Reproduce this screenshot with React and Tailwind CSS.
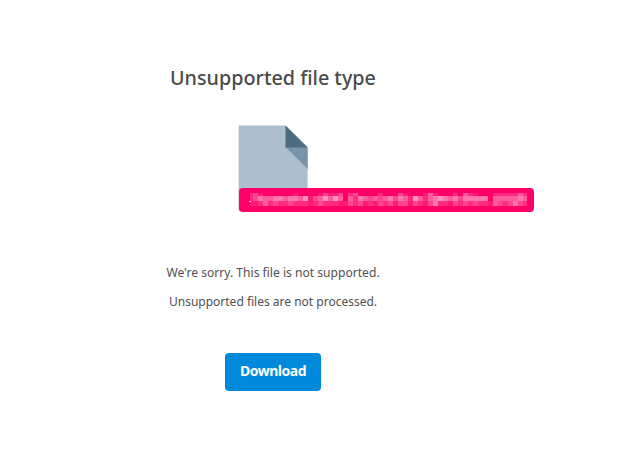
// three rows of tint levels (0-6), one digit per 5px cell
const mosaicRows = [
  '23100000010000131130230000200031000141000204210002222242',
  '23544554554613464640425434345354264245654535555504444454',
  '11242322322212322211323121323133132135221323232214323532',
];

const tints = [
  'bg-[#ff0066]',
  'bg-[#ff1a75]',
  'bg-[#ff2b80]',
  'bg-[#ff4590]',
  'bg-[#ff5c9c]',
  'bg-[#ff77ad]',
  'bg-[#ff94be]',
];

function FileIcon() {
  return (
    <svg width="70" height="86" viewBox="0 0 70 86" className="block">
      <path d="M0.6 0.4H47.5L69.6 22V86H0.6Z" fill="#adbecd" />
      <path d="M47.5 22L69.6 44V22Z" fill="#7694ac" />
      <path d="M47.5 0.4V22.5H69.6Z" fill="#4d6b80" />
    </svg>
  );
}

function RedactedName() {
  return (
    <div className="absolute left-px top-[63px] w-[295px] h-6 rounded bg-[#ff0066] pt-[5px] pl-[11px]">
      <div className="absolute left-[10px] top-[13px] w-[2px] h-px bg-[#ffc0da]" />
      {mosaicRows.map((row, i) => (
        <div key={i} className={i === 0 ? 'flex h-[3px]' : 'flex h-[5px]'}>
          {row.split('').map((level, j) => (
            <div key={j} className={`h-full shrink-0 w-[5px] first:w-[3px] last:w-1 ${tints[level]}`} />
          ))}
        </div>
      ))}
    </div>
  );
}

export default function App() {
  return (
    <main className="h-[462px] w-full bg-white overflow-hidden font-['Noto_Sans',sans-serif] text-[#4a4a4a]">
      <div className="w-[546px] flex flex-col items-center pt-16">
        <h1 className="text-[19.75px] leading-7 font-medium whitespace-nowrap">Unsupported file type</h1>
        <div className="relative mt-[33px] w-[70px]">
          <FileIcon />
          <RedactedName />
        </div>
        <p className="mt-[52px] text-[12.1px] leading-5 whitespace-nowrap text-[#505050]">We're sorry. This file is not supported.</p>
        <p className="mt-[9px] text-xs leading-5 whitespace-nowrap text-[#505050]">Unsupported files are not processed.</p>
        <button className="mt-[41px] w-24 h-[38px] pb-1 rounded bg-[#0089da] text-white text-[14px] tracking-[-0.5px] font-bold">
          Download
        </button>
      </div>
    </main>
  );
}
